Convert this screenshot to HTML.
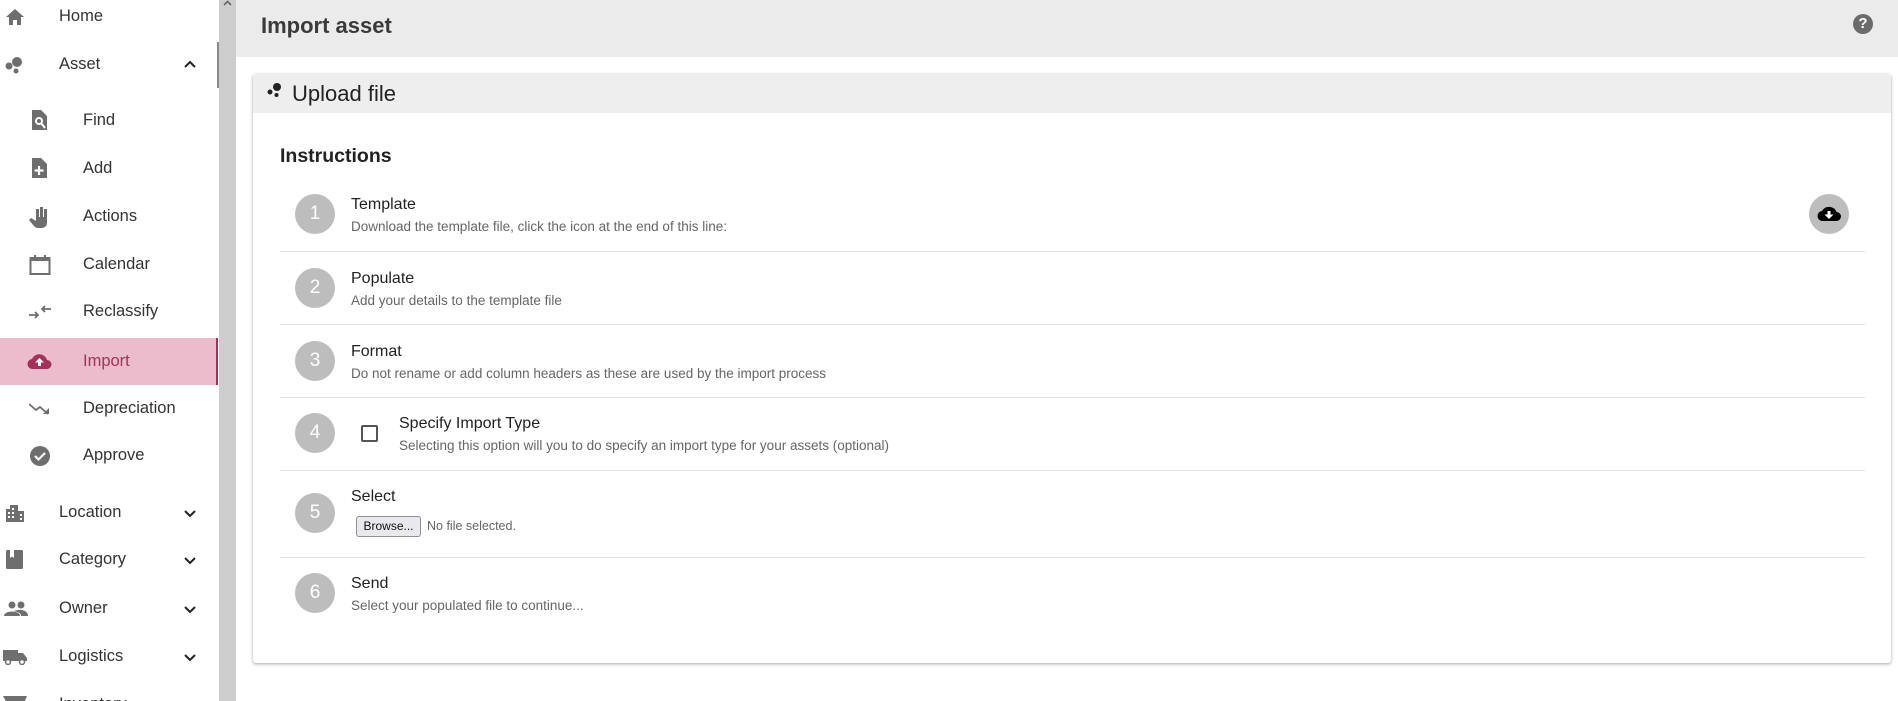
<!DOCTYPE html>
<html><head><meta charset="utf-8">
<style>
*{box-sizing:border-box;margin:0;padding:0}
body{width:1898px;height:701px;overflow:hidden;background:#fff;font-family:"Liberation Sans",sans-serif;position:relative;color:#212121}
.sb{position:absolute;left:0;top:0;width:218px;height:701px;background:#fff;overflow:hidden}
.it{position:absolute;left:0;width:218px;height:48px;font-size:16.5px;color:#333}
.it .tx{position:absolute;left:59px;top:14px}
.it.sub .tx{left:83px}
.it svg{position:absolute;fill:#6e6e6e}
.it .ch{position:absolute;left:182px;top:16px}
.hl{background:#ebbccb;border-right:2px solid #a3325a}
.hl .tx{color:#a3325a}
.scroll{position:absolute;left:219px;top:0;width:17px;height:701px;background:#cdcdcd}
.thumb{position:absolute;left:217px;top:42px;width:2px;height:46px;background:#8a8a8a}
.hdr{position:absolute;left:236px;top:0;width:1662px;height:57px;background:#ebebeb}
.hdr h1{position:absolute;left:25px;top:13px;font-size:22px;font-weight:bold;color:#3a3a3a}
.help{position:absolute;left:1617px;top:14px;width:20px;height:20px;border-radius:50%;background:#6b6b6b;color:#fff;font-size:15px;font-weight:bold;text-align:center;line-height:20px}
.card{position:absolute;left:253px;top:74px;width:1638px;height:589px;background:#fff;border-radius:3px;box-shadow:0 1px 3px rgba(0,0,0,.35)}
.ch2{height:39px;background:#eeeeee;border-radius:3px 3px 0 0;position:relative}
.ch2 span{position:absolute;left:39px;top:7px;font-size:22px;color:#222}
.ins{position:absolute;left:27px;top:71px;font-size:19.5px;font-weight:bold;color:#222}
.circ{position:absolute;left:42px;width:40px;height:40px;border-radius:50%;background:#bdbdbd;color:#fff;font-size:19px;text-align:center;line-height:40px}
.t{position:absolute;font-size:16px;color:#222}
.s{position:absolute;font-size:13.5px;color:#666}
.dv{position:absolute;left:27px;width:1585px;height:1px;background:#e0e0e0}
.dl{position:absolute;left:1556px;top:120px;width:40px;height:40px;border-radius:50%;background:#bdbdbd}
.cb{position:absolute;left:108px;top:351px;width:17px;height:17px;border:2px solid #555;border-radius:2px}
.br{position:absolute;left:103px;top:442px;width:65px;height:21px;border:1px solid #8f8f8f;border-radius:3px;background:#e9e9ed;font-size:12px;color:#111;text-align:center;line-height:19px}
</style></head><body>
<div class="sb">
 <div class="it" style="top:-7px"><svg style="left:5px;top:15px" width="20" height="18" viewBox="0 0 20 18"><path d="M10 1 L1 9 H4 V17 H8 V12 H12 V17 H16 V9 H19Z"/></svg><span class="tx">Home</span></div>
 <div class="it" style="top:41px"><svg style="left:5px;top:14px" width="22" height="20" viewBox="0 0 22 20"><circle cx="4" cy="11" r="3.5"/><circle cx="12" cy="7" r="5"/><circle cx="11" cy="16" r="2.5"/></svg><span class="tx">Asset</span><svg class="ch" width="16" height="16" viewBox="0 0 16 16"><path d="M3 10 L8 5 L13 10" stroke="#222" stroke-width="2" fill="none"/></svg></div>
 <div class="it sub" style="top:97px"><svg style="left:30px;top:13px" width="18" height="22" viewBox="0 0 18 22"><path d="M2 0 H11 L17 6 V20 H2Z"/><circle cx="9" cy="11" r="4" fill="#fff"/><circle cx="9" cy="11" r="2" fill="#6e6e6e"/><path d="M11 13 L15 18" stroke="#fff" stroke-width="2"/></svg><span class="tx">Find</span></div>
 <div class="it sub" style="top:145px"><svg style="left:30px;top:13px" width="18" height="22" viewBox="0 0 18 22"><path d="M2 0 H11 L17 6 V20 H2Z"/><path d="M9 8 V17 M4.5 12.5 H13.5" stroke="#fff" stroke-width="2.2"/></svg><span class="tx">Add</span></div>
 <div class="it sub" style="top:193px"><svg style="left:28px;top:12px" width="24" height="24" viewBox="0 0 24 24"><path d="M8 4 h3 v8 h1 V2 h3 v10 h1 V4 h3 v14 a5 5 0 0 1-5 5 h-4 a5 5 0 0 1-4-2 L1 15 l2-2 l5 3Z"/></svg><span class="tx">Actions</span></div>
 <div class="it sub" style="top:241px"><svg style="left:29px;top:13px" width="22" height="22" viewBox="0 0 22 22"><rect x="1.5" y="4" width="19" height="16" fill="none" stroke="#6e6e6e" stroke-width="2"/><rect x="1.5" y="4" width="19" height="3"/><path d="M6 1v4M16 1v4" stroke="#6e6e6e" stroke-width="2"/></svg><span class="tx">Calendar</span></div>
 <div class="it sub" style="top:288px"><svg style="left:29px;top:16px" width="22" height="16" viewBox="0 0 22 16"><path d="M0 11 H8 M6 8 L9 11 L6 14 M22 5 H14 M16 2 L13 5 L16 8" stroke="#6e6e6e" stroke-width="1.8" fill="none"/></svg><span class="tx">Reclassify</span></div>
 <div class="it sub hl" style="top:338px;height:47px"><svg style="left:27px;top:14px;fill:#a3325a" width="25" height="18" viewBox="0 0 25 18"><path d="M6 17 a5 5 0 0 1-1-10 a8 8 0 0 1 15 1 a4.5 4.5 0 0 1 0 9Z"/><path d="M12.5 6 L8 10.5 H11 V14 H14 V10.5 H17Z" fill="#fff"/></svg><span class="tx">Import</span></div>
 <div class="it sub" style="top:385px"><svg style="left:29px;top:17px" width="22" height="14" viewBox="0 0 22 14"><path d="M0 2 L7 8 L11 5 L19 12" stroke="#6e6e6e" stroke-width="1.8" fill="none"/><path d="M14 12 H20 V6Z"/></svg><span class="tx">Depreciation</span></div>
 <div class="it sub" style="top:432px"><svg style="left:29px;top:13px" width="22" height="22" viewBox="0 0 22 22"><circle cx="11" cy="11" r="10"/><path d="M6 11 L9.5 14.5 L16 8" stroke="#fff" stroke-width="2.2" fill="none"/></svg><span class="tx">Approve</span></div>
 <div class="it" style="top:489px"><svg style="left:5px;top:14px" width="20" height="20" viewBox="0 0 20 20"><path d="M1 6 H5 V2 H13 V8 H19 V19 H1Z"/><g fill="#fff"><rect x="3" y="9" width="2" height="2"/><rect x="3" y="13" width="2" height="2"/><rect x="7" y="5" width="2" height="2"/><rect x="7" y="9" width="2" height="2"/><rect x="7" y="13" width="2" height="2"/><rect x="15" y="11" width="2" height="2"/><rect x="15" y="15" width="2" height="2"/></g></svg><span class="tx">Location</span><svg class="ch" width="16" height="16" viewBox="0 0 16 16"><path d="M3 6 L8 11 L13 6" stroke="#222" stroke-width="2" fill="none"/></svg></div>
 <div class="it" style="top:536px"><svg style="left:6px;top:14px" width="18" height="20" viewBox="0 0 18 20"><rect x="0" y="0" width="17" height="19" rx="1.5"/><path d="M4 0 V8 L6 6.5 L8 8 V0Z" fill="#fff"/></svg><span class="tx">Category</span><svg class="ch" width="16" height="16" viewBox="0 0 16 16"><path d="M3 6 L8 11 L13 6" stroke="#222" stroke-width="2" fill="none"/></svg></div>
 <div class="it" style="top:585px"><svg style="left:4px;top:16px" width="24" height="16" viewBox="0 0 24 16"><circle cx="8" cy="4" r="3.5"/><circle cx="17" cy="4" r="3.5"/><path d="M0 15 C0 9 16 9 16 15Z M10 10 C14 8 24 8 24 15 H17 C17 12 14 11 10 10Z"/></svg><span class="tx">Owner</span><svg class="ch" width="16" height="16" viewBox="0 0 16 16"><path d="M3 6 L8 11 L13 6" stroke="#222" stroke-width="2" fill="none"/></svg></div>
 <div class="it" style="top:633px"><svg style="left:3px;top:16px" width="24" height="16" viewBox="0 0 24 16"><path d="M0 1 H15 V12 H0Z M15 4 H20 L24 9 V12 H15Z"/><circle cx="5" cy="13" r="2.5" fill="#fff" stroke="#6e6e6e" stroke-width="1.5"/><circle cx="19" cy="13" r="2.5" fill="#fff" stroke="#6e6e6e" stroke-width="1.5"/></svg><span class="tx">Logistics</span><svg class="ch" width="16" height="16" viewBox="0 0 16 16"><path d="M3 6 L8 11 L13 6" stroke="#222" stroke-width="2" fill="none"/></svg></div>
 <div class="it" style="top:681px"><svg style="left:3px;top:14px" width="24" height="10" viewBox="0 0 24 10"><path d="M0 1 H24 L21 8 H4Z"/></svg><span class="tx">Inventory</span></div>
</div>
<div class="thumb"></div>
<div class="scroll"><svg style="position:absolute;left:4px;top:0" width="9" height="6" viewBox="0 0 9 6"><path d="M1 5 L4.5 1.5 L8 5" stroke="#555" stroke-width="1.4" fill="none"/></svg></div>
<div class="hdr"><h1>Import asset</h1><div class="help">?</div></div>
<div class="card">
 <div class="ch2"><svg style="position:absolute;left:14px;top:8px" width="18" height="18" viewBox="0 0 18 18"><circle cx="3" cy="10" r="2.5" fill="#222"/><circle cx="10" cy="5" r="4" fill="#222"/><circle cx="9.5" cy="13" r="2" fill="#222"/></svg><span>Upload file</span></div>
 <div class="ins">Instructions</div>
 <div class="circ" style="top:120px">1</div>
 <div class="t" style="left:98px;top:122px">Template</div>
 <div class="s" style="left:98px;top:145px">Download the template file, click the icon at the end of this line:</div>
 <div class="dl"><svg style="position:absolute;left:8px;top:10px" width="24" height="18" viewBox="0 0 24 18"><path d="M6 17 a5 5 0 0 1-1-10 a8 8 0 0 1 14.5 1 a4.5 4.5 0 0 1 0 9Z" fill="#000"/><path d="M12 15 L7.5 10.5 H10.5 V7 H13.5 V10.5 H16.5Z" fill="#fff"/></svg></div>
 <div class="dv" style="top:177px"></div>
 <div class="circ" style="top:194px">2</div>
 <div class="t" style="left:98px;top:196px">Populate</div>
 <div class="s" style="left:98px;top:219px">Add your details to the template file</div>
 <div class="dv" style="top:250px"></div>
 <div class="circ" style="top:267px">3</div>
 <div class="t" style="left:98px;top:269px">Format</div>
 <div class="s" style="left:98px;top:292px">Do not rename or add column headers as these are used by the import process</div>
 <div class="dv" style="top:323px"></div>
 <div class="circ" style="top:339px">4</div>
 <div class="cb"></div>
 <div class="t" style="left:146px;top:341px">Specify Import Type</div>
 <div class="s" style="left:146px;top:364px">Selecting this option will you to do specify an import type for your assets (optional)</div>
 <div class="dv" style="top:396px"></div>
 <div class="circ" style="top:419px">5</div>
 <div class="t" style="left:98px;top:414px">Select</div>
 <div class="br">Browse...</div>
 <div class="s" style="left:174px;top:445px;font-size:12.5px">No file selected.</div>
 <div class="dv" style="top:483px"></div>
 <div class="circ" style="top:499px">6</div>
 <div class="t" style="left:98px;top:501px">Send</div>
 <div class="s" style="left:98px;top:524px">Select your populated file to continue...</div>
</div>
</body></html>
